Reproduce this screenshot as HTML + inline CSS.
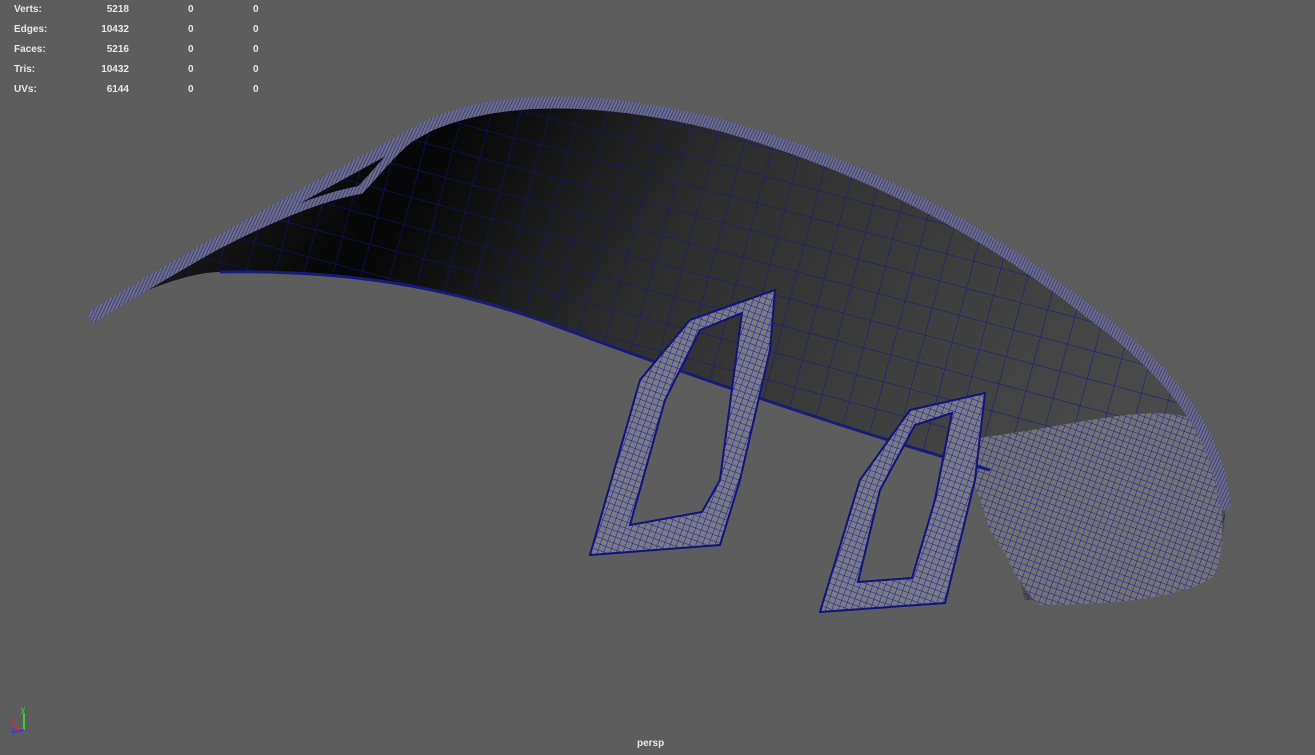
<!DOCTYPE html>
<html><head><style>
body{margin:0;width:1315px;height:755px;overflow:hidden;background:#5d5d5d;font-family:"Liberation Sans",sans-serif;}
.st{position:absolute;color:#e8e8e8;font-size:10px;font-weight:bold;}
</style></head><body>
<svg width="1315" height="755" style="position:absolute;left:0;top:0">
<defs>
<linearGradient id="g" x1="0" y1="0" x2="1" y2="0.3">
<stop offset="0" stop-color="#2a2a2a"/><stop offset="0.3" stop-color="#050505"/><stop offset="0.55" stop-color="#2e2e2e"/><stop offset="1" stop-color="#4a4a4a"/></linearGradient>
<pattern id="p" width="6" height="6" patternUnits="userSpaceOnUse" patternTransform="rotate(20)">
<path d="M0 0H6M0 0V6" stroke="#1a1a9a" stroke-width="1"/></pattern>
<pattern id="q" width="28" height="28" patternUnits="userSpaceOnUse" patternTransform="rotate(15)">
<path d="M0 0H28M0 0V28" stroke="#14148a" stroke-width="1"/></pattern>
<pattern id="r" width="3" height="20" patternUnits="userSpaceOnUse" patternTransform="rotate(25)">
<path d="M0 0V20" stroke="#1a1a8a" stroke-width="1"/></pattern>
</defs>
<path d="M90,318 C140,290 190,272 220,272 C330,270 430,282 540,320 C700,380 880,440 990,470 L1025,600 L1130,600 C1200,590 1225,560 1225,510 C1220,440 1180,380 1100,320 C1000,240 880,170 720,125 C600,95 500,95 430,125 C330,180 200,250 90,318 Z" fill="url(#g)"/>
<path d="M90,318 C140,290 190,272 220,272 C330,270 430,282 540,320 C700,380 880,440 990,470 L1025,600 L1130,600 C1200,590 1225,560 1225,510 C1220,440 1180,380 1100,320 C1000,240 880,170 720,125 C600,95 500,95 430,125 C330,180 200,250 90,318 Z" fill="url(#q)"/>
<path d="M960,440 C1060,430 1150,400 1195,420 C1225,470 1228,540 1215,575 C1190,595 1130,605 1040,605 C1020,590 1010,560 990,530 Z" fill="#737373"/>
<path d="M960,440 C1060,430 1150,400 1195,420 C1225,470 1228,540 1215,575 C1190,595 1130,605 1040,605 C1020,590 1010,560 990,530 Z" fill="url(#p)"/>
<path d="M90,318 C200,250 330,180 430,125 C500,95 600,95 720,125 C880,170 1000,240 1100,320 C1180,380 1220,440 1225,510" fill="none" stroke="#6c6c84" stroke-width="12"/>
<path d="M90,318 C200,250 330,180 430,125 C500,95 600,95 720,125 C880,170 1000,240 1100,320 C1180,380 1220,440 1225,510" fill="none" stroke="url(#r)" stroke-width="12"/>
<path d="M95,315 C200,250 300,200 360,190 C380,170 400,140 430,125" fill="none" stroke="#6c6c84" stroke-width="8"/>
<path d="M95,315 C200,250 300,200 360,190 C380,170 400,140 430,125" fill="none" stroke="url(#r)" stroke-width="8"/>
<path d="M220,272 C330,270 430,282 540,320 C700,380 880,440 990,470" fill="none" stroke="#1a1a7a" stroke-width="3"/>
<path fill-rule="evenodd" d="M590,555 L640,380 L690,320 L775,290 L770,350 L740,480 L720,545 Z M630,525 L665,400 L700,330 L742,313 L720,480 L702,512 Z" fill="#7a7a84" stroke="#12127a" stroke-width="2"/>
<path fill-rule="evenodd" d="M590,555 L640,380 L690,320 L775,290 L770,350 L740,480 L720,545 Z M630,525 L665,400 L700,330 L742,313 L720,480 L702,512 Z" fill="url(#p)"/>
<path fill-rule="evenodd" d="M820,612 L860,480 L910,410 L985,393 L975,480 L945,603 Z M858,582 L880,490 L915,425 L952,413 L935,500 L912,578 Z" fill="#7a7a84" stroke="#12127a" stroke-width="2"/>
<path fill-rule="evenodd" d="M820,612 L860,480 L910,410 L985,393 L975,480 L945,603 Z M858,582 L880,490 L915,425 L952,413 L935,500 L912,578 Z" fill="url(#p)"/>
<line x1="24" y1="730" x2="24" y2="713" stroke="#2f2" stroke-width="1.5"/>
<line x1="24" y1="730" x2="14" y2="727" stroke="#f22" stroke-width="1.5"/>
<line x1="24" y1="730" x2="14" y2="732" stroke="#33f" stroke-width="1.5"/>
<text x="21" y="712" fill="#2f2" font-size="8" font-family="Liberation Sans">y</text>
<text x="11" y="723" fill="#f22" font-size="8" font-family="Liberation Sans">x</text>
<text x="11" y="733" fill="#33f" font-size="8" font-family="Liberation Sans">z</text>
</svg>
<div class="st" style="left:14px;top:4px">Verts:</div><div class="st" style="left:14px;top:24px">Edges:</div><div class="st" style="left:14px;top:44px">Faces:</div><div class="st" style="left:14px;top:64px">Tris:</div><div class="st" style="left:14px;top:84px">UVs:</div>
<div class="st" style="left:80px;width:49px;text-align:right;top:4px">5218</div>
<div class="st" style="left:80px;width:49px;text-align:right;top:24px">10432</div>
<div class="st" style="left:80px;width:49px;text-align:right;top:44px">5216</div>
<div class="st" style="left:80px;width:49px;text-align:right;top:64px">10432</div>
<div class="st" style="left:80px;width:49px;text-align:right;top:84px">6144</div>
<div class="st" style="left:188px;top:4px">0</div><div class="st" style="left:188px;top:24px">0</div><div class="st" style="left:188px;top:44px">0</div><div class="st" style="left:188px;top:64px">0</div><div class="st" style="left:188px;top:84px">0</div>
<div class="st" style="left:253px;top:4px">0</div><div class="st" style="left:253px;top:24px">0</div><div class="st" style="left:253px;top:44px">0</div><div class="st" style="left:253px;top:64px">0</div><div class="st" style="left:253px;top:84px">0</div>
<div class="st" style="left:637px;top:738px">persp</div>
</body></html>
